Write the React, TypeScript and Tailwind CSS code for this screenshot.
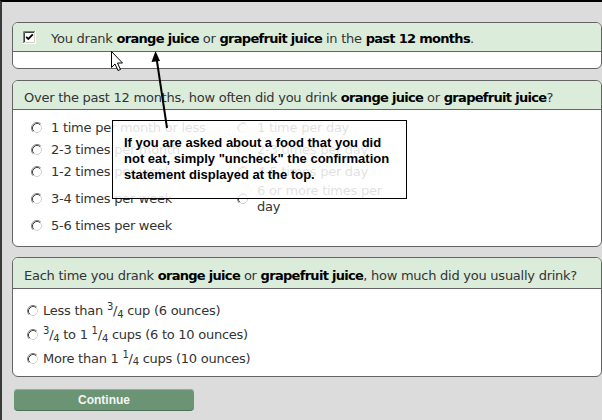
import type { ReactNode } from 'react'

function Radio() {
  return (
    <svg width="12" height="12" viewBox="0 0 12 12" className="shrink-0">
      <circle cx="6" cy="6" r="5" fill="#ffffff" />
      <path d="M2.11 9.89 A5.5 5.5 0 0 1 9.89 2.11" stroke="#808080" fill="none" />
      <path d="M2.82 9.18 A4.5 4.5 0 0 1 9.18 2.82" stroke="#404040" fill="none" />
      <path d="M9.89 2.11 A5.5 5.5 0 0 1 2.11 9.89" stroke="#ffffff" fill="none" />
      <path d="M9.18 2.82 A4.5 4.5 0 0 1 2.82 9.18" stroke="#d4d0c8" fill="none" />
    </svg>
  )
}

function Checkbox() {
  return (
    <svg width="13" height="13" viewBox="0 0 13 13" className="shrink-0">
      <rect x="0" y="0" width="13" height="13" fill="#ffffff" />
      <path d="M0.5 12 V0.5 H12" stroke="#808080" fill="none" />
      <path d="M1.5 11 V1.5 H11" stroke="#404040" fill="none" />
      <path d="M0 12.5 H12.5 V0" stroke="#ffffff" fill="none" />
      <path d="M1 11.5 H11.5 V1" stroke="#d4d0c8" fill="none" />
      <polyline points="3.2,5.8 5.3,8 9.8,3.4" stroke="#000000" strokeWidth="1.8" fill="none" />
    </svg>
  )
}

function B({ children }: { children: ReactNode }) {
  return <b className="tracking-[-0.7px] text-black">{children}</b>
}

function Panel({
  header,
  headerHeight,
  bodyClass,
  children,
}: {
  header: ReactNode
  headerHeight: string
  bodyClass: string
  children?: ReactNode
}) {
  return (
    <div className="w-[590px] overflow-hidden rounded-[6px] border border-[#646464] bg-white">
      <div className={`flex items-center border-b border-[#646464] bg-[#dcecdb] ${headerHeight}`}>{header}</div>
      <div className={bodyClass}>{children}</div>
    </div>
  )
}

const freq: [string, string][] = [
  ['1 time per month or less', '1 time per day'],
  ['2-3 times per month', '2-3 times per day'],
  ['1-2 times per week', '4-5 times per day'],
  ['3-4 times per week', '6 or more times per day'],
  ['5-6 times per week', ''],
]

function Frac({ a, b }: { a: string; b: string }) {
  return (
    <>
      <sup className="text-[10px]">{a}</sup>/<sub className="text-[10px]">{b}</sub>
    </>
  )
}

export default function App() {
  return (
    <div className="relative h-[420px] w-[602px] overflow-hidden font-['DejaVu_Sans',Verdana,sans-serif] text-[13px] tracking-[-0.25px] text-[#333333]">
      <div className="h-full border-t-2 border-l-2 border-t-black border-l-[#3a3a3a] bg-[#dcdcdc] pt-[20px] pl-[10px]">
        <Panel
          headerHeight="h-[29px]"
          bodyClass="h-[16px]"
          header={
            <div className="flex items-center pl-[10px]">
              <Checkbox />
              <span className="ml-[15px] pt-[4px]">
                You drank <B>orange juice</B> or <B>grapefruit juice</B> in the <B>past 12 months</B>.
              </span>
            </div>
          }
        />

        <div className="mt-[11px]">
          <Panel
            headerHeight="h-[29px]"
            bodyClass="h-[136px] pt-[7px] pl-[18px]"
            header={
              <span className="pl-[11px] pt-[6px]">
                Over the past 12 months, how often did you drink <B>orange juice</B> or <B>grapefruit juice</B>?
              </span>
            }
          >
            <div className="grid grid-cols-[206px_150px] leading-[16px]">
              {freq.map(([l, r]) => (
                <div key={l} className="contents">
                  <div className="flex min-h-[22px] items-center gap-[8px]">
                    <Radio />
                    <span>{l}</span>
                  </div>
                  <div className="flex min-h-[22px] items-center gap-[8px]">
                    {r ? (
                      <>
                        <Radio />
                        <span className="w-[125px]">{r}</span>
                      </>
                    ) : null}
                  </div>
                </div>
              ))}
            </div>
          </Panel>
        </div>

        <div className="mt-[10px]">
          <Panel
            headerHeight="h-[31px]"
            bodyClass="h-[87px] pt-[10px] pl-[14px]"
            header={
              <span className="pl-[11px] pt-[6px]">
                Each time you drank <B>orange juice</B> or <B>grapefruit juice</B>, how much did you usually drink?
              </span>
            }
          >
            <div className="flex h-[24px] items-center gap-[4px]">
              <Radio />
              <span>
                Less than <Frac a="3" b="4" /> cup (6 ounces)
              </span>
            </div>
            <div className="flex h-[24px] items-center gap-[4px]">
              <Radio />
              <span>
                <Frac a="3" b="4" /> to 1 <Frac a="1" b="4" /> cups (6 to 10 ounces)
              </span>
            </div>
            <div className="flex h-[23px] items-center gap-[4px]">
              <Radio />
              <span>
                More than 1 <Frac a="1" b="4" /> cups (10 ounces)
              </span>
            </div>
          </Panel>
        </div>

        <button
          type="button"
          className="mt-[12px] ml-[2px] flex h-[22px] w-[180px] items-center justify-center rounded-[4px] border-b border-b-[#4f6f56] bg-[#6b9474] font-['Liberation_Sans',Arial,sans-serif] text-[12px] font-bold tracking-normal text-[#f4f4f4] shadow-[inset_0_1px_0_#8fb295]"
        >
          Continue
        </button>
      </div>

      {/* hint callout */}
      <div className="absolute top-[120px] left-[112px] h-[79px] w-[295px] border border-black bg-white/85 pt-[14px] pl-[11px] font-['Liberation_Sans',Arial,sans-serif] text-[13px] leading-[16px] font-bold tracking-normal text-black">
        If you are asked about a food that you did
        <br />
        not eat, simply "uncheck" the confirmation
        <br />
        statement displayed at the top.
      </div>

      <svg className="pointer-events-none absolute top-0 left-0" width="602" height="420">
        <line x1="167" y1="128" x2="156.5" y2="58" stroke="#000" strokeWidth="2" />
        <polygon points="155.5,51 151.5,62 160,61" fill="#000" />
      </svg>

      <svg className="pointer-events-none absolute top-[50px] left-[110px]" width="14" height="22" viewBox="0 0 14 22">
        <path d="M1.5 1.5 L1.5 17.5 L5 14 L8 20.5 L10.5 19.5 L7.5 13 L12.5 13 Z" fill="#ffffff" stroke="#000000" strokeWidth="1" />
      </svg>
    </div>
  )
}
